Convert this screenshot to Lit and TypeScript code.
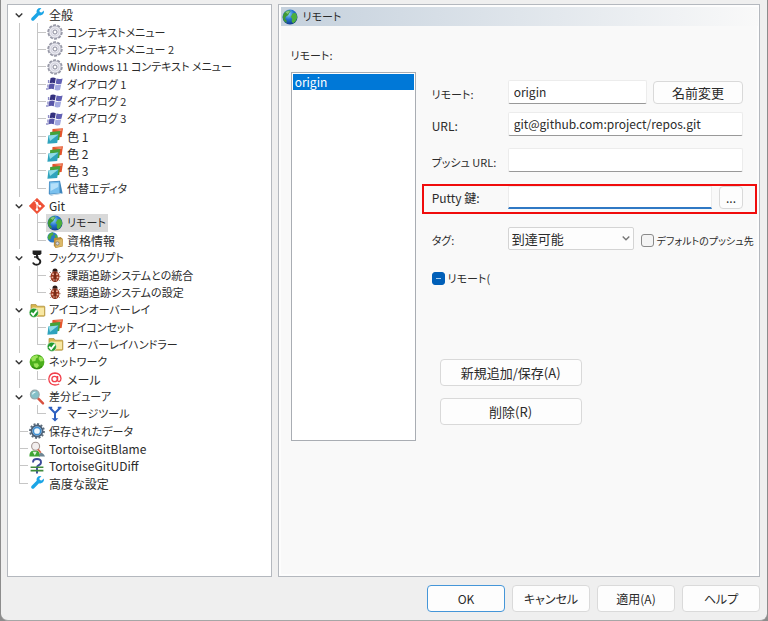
import { LitElement, html, svg, css, nothing } from "lit";
import { customElement, property, state } from "lit/decorators.js";
import { classMap } from "lit/directives/class-map.js";

const globe = svg`
  <circle cx="8" cy="8" r="7.5" fill="url(#sea)"/>
  <path d="M2.2 3.8Q4.5 1 7.5 1.2L8.6 2.6 7 4.2 6.4 6 4.2 7.4 3 9.6 4.6 11.4 4.4 14Q1 11.6.8 8.4 1 5.6 2.2 3.8Z" fill="#3f9a35"/>
  <path d="M10.8 4.2 13.6 4Q15.4 6 15.2 9L13.4 12.6 11 14.6 9.6 12.2 10.2 9.8 8.8 7.8Z" fill="#4cae3c"/>
  <path d="M3.5 3.2Q6 1.2 8 2.4L5.5 5Z" fill="#b9e7b0" opacity=".6"/>`;

const folderCheck = svg`
  <path d="M2 2.6h5l1.2 1.6H15q.8 0 .8.8V13.4q0 .8-.8.8H2z" fill="#d9b650" stroke="#a98a35" stroke-width=".7"/>
  <path d="M3.4 5.6h11.6v7.6H3.4z" fill="#f8e8a4"/>
  <circle cx="4.8" cy="10.8" r="4.6" fill="#219a2e" stroke="#e8f5e5" stroke-width=".6"/>
  <path d="M2.2 10.6 4.2 13 7.8 8.4" fill="none" stroke="#fff" stroke-width="1.9"/>`;

const layers = svg`
  <path d="M5.5 1 16 .2 14.6 9 5 10z" fill="#e4542c"/>
  <path d="M7 1.8 14.8 1.2 14.4 3z" fill="#f39a78"/>
  <path d="M3.2 4 13.2 3 12.2 12 2.6 13z" fill="#44a23a"/>
  <path d="M1.4 7.6 11.4 6.6 10.2 15 .4 15.8z" fill="#2fa3bd"/>
  <path d="M1.4 7.6 11.4 6.6 3 13z" fill="#8fdbe6"/>`;

const ICONS: Record<string, unknown> = {
  wrench: svg`<path d="M14.9 3.6 12.6 5.6 10.8 5 10.4 3.2 12.4 1.2Q9.8.6 8.2 2.4 7.1 3.9 7.7 5.8L2.5 11Q1.6 12.2 2.6 13.3 3.7 14.3 4.9 13.4L10 8.2Q12 8.8 13.6 7.6 15.4 6 14.9 3.6Z" fill="#1ba5e6"/>`,
  gear: svg`
    <circle cx="8" cy="8" r="6.7" fill="none" stroke="#9495a4" stroke-width="2" stroke-dasharray="2.9 1.3"/>
    <circle cx="8" cy="8" r="6.1" fill="#eaeaf1" stroke="#a3a4b2" stroke-width=".8"/>
    <circle cx="8" cy="8" r="4" fill="none" stroke="#d4d4df" stroke-width="1"/>
    <circle cx="8" cy="8" r="2" fill="#fff" stroke="#8a8b9b" stroke-width="1"/>`,
  windows: svg`
    <path d="M3.6 2Q6.2.8 8.8 2.2L7.9 7.2Q5.4 6.2 2.6 7.2z" fill="#34317f"/>
    <path d="M9.6 2.6Q12.4 3.6 15.6 2.4L14.4 7.8Q11.6 8.8 8.7 7.6z" fill="#6261b4"/>
    <path d="M2.4 8Q5.2 7 7.7 8L6.8 13.2Q4.2 12.2 1.2 13.4z" fill="#5856a8"/>
    <path d="M8.5 8.4Q11.4 9.6 14.2 8.6L13 14Q10.2 15 7.5 13.8z" fill="#a3a9e0"/>
    <path d="M1.6 4v3M1 8.6v3M0 12v2" stroke="#8b8ac6" stroke-width="1.4"/>`,
  layers,
  note: svg`
    <path d="M2 1.6 13 .8 15.6 13.4 4 15.4 1.8 14z" fill="#3f86bd"/>
    <path d="M2.6 2.2 12.4 1.6 12.6 13 2.8 13.8z" fill="#79c0ee"/>
    <path d="M3.6 3.4 11.4 3 11.2 7 3.6 11z" fill="#b5e0fa"/>
    <path d="M3 15 14.4 13.6" stroke="#d8e6ef" stroke-width="1"/>`,
  git: svg`
    <path d="M8 .2 15.8 8 8 15.8.2 8z" fill="#ee5035" stroke="#ee5035" stroke-width=".6" stroke-linejoin="round"/>
    <path d="M5.6 2.8 8 5.2V11.6M8 5.6 10.8 8.3" stroke="#fff" stroke-width="1.1" fill="none"/>
    <circle cx="8" cy="5.3" r="1.2" fill="#fff"/><circle cx="8" cy="11.6" r="1.3" fill="#fff"/><circle cx="11" cy="8.3" r="1.2" fill="#fff"/>`,
  globe,
  lock: svg`
    <circle cx="5.6" cy="5.4" r="5.2" fill="#2b78c8"/>
    <path d="M1 4Q3 .4 6 .6L6.6 2.6 4.4 4.2 3.6 7 2 8Q.2 6 1 4zM7.6 2.6 10 3 10.6 6 8.4 7z" fill="#4dab40"/>
    <path d="M7 6.2 13.6 5 15.9 7 15.7 14.4 8.6 16 6.8 13.8z" fill="#b98c38"/>
    <path d="M8.6 8.2 15.4 7V14L8.6 15.6z" fill="#dcb968"/>
    <circle cx="10.4" cy="11.4" r="1.7" fill="#d9d9d9" stroke="#777" stroke-width=".8"/>`,
  hook: svg`
    <path d="M3.6.6H12.4V3.4L11.2 5H4.8L3.6 3.4z" fill="#202020"/>
    <path d="M8 5V7.6L10.8 10Q12 12 10.4 13.6 8.4 15.4 5.8 14.4 4.4 13.8 4 12.4" fill="none" stroke="#202020" stroke-width="1.9"/>
    <path d="M5 7h4.6" stroke="#202020" stroke-width="1.4"/>`,
  bug: svg`
    <path d="M4 6 2.8 4.8M12 6 13.2 4.8M3.6 9.6H2.4M12.4 9.6h1.2M4.4 12.6 3.2 13.8M11.6 12.6 12.8 13.8" stroke="#8a6a5c" stroke-width=".8"/>
    <path d="M5.4 4.8Q5.4 1.6 8 1.6T10.6 4.8z" fill="#2a1a16"/>
    <ellipse cx="8" cy="9.6" rx="4.5" ry="5.4" fill="#9c3a22"/>
    <path d="M8 4.4v10.4" stroke="#4a1b10" stroke-width=".9"/>
    <g fill="#eebba6"><circle cx="6" cy="7.2" r=".9"/><circle cx="10" cy="7.2" r=".9"/><circle cx="5.4" cy="10.4" r=".9"/><circle cx="10.6" cy="10.4" r=".9"/><circle cx="7" cy="13" r=".7"/><circle cx="9.2" cy="13" r=".7"/></g>`,
  folderCheck,
  network: svg`
    <circle cx="8" cy="8" r="7.4" fill="#4caf1c"/>
    <path d="M2 4.4Q4.6 1 8 1.2L9.4 3 7 4.6 6.4 7 3.4 7.6zM10 2.4 13.4 3.6 14.6 7 11.4 7.4 9.6 5.2zM4.6 9.4 8.6 9.2 10 11.6 7.6 14.4 5.4 12.6z" fill="#9be35a"/>
    <path d="M3 12.4Q8 16.6 13 12.4" stroke="#2f8610" stroke-width="1.2" fill="none"/>`,
  mail: svg`
    <circle cx="7.6" cy="8" r="2.7" fill="none" stroke="#f2404c" stroke-width="1.3"/>
    <path d="M10.6 5V9.2Q10.8 10.8 12.2 10.6 14 10 14 7.6 13.6 2.2 8 2 2.2 2.4 1.8 8 2.2 13.8 8 14 10.4 14 12.2 13" fill="none" stroke="#f2404c" stroke-width="1.3"/>`,
  search: svg`
    <path d="M8.6 8.8 14 14.4" stroke="#d8513f" stroke-width="2.4" stroke-linecap="round"/>
    <circle cx="5.8" cy="5.6" r="4.4" fill="#84c0c8" stroke="#98a8ab" stroke-width="1.2"/>
    <path d="M3.4 5.4Q4 3.2 6.4 3.2" stroke="#e4f6f8" stroke-width="1.2" fill="none"/>`,
  merge: svg`
    <path d="M3 2 8 7 13 2M8 6.8V14" fill="none" stroke="#2c5fc0" stroke-width="2"/>
    <path d="M1.6 1.6H5.2M10.8 1.6H14.4" stroke="#2c5fc0" stroke-width="1.8"/>
    <path d="M4.6 12.2 8 15.6 11.4 12.2z" fill="#2c5fc0"/>`,
  blueGear: svg`
    <circle cx="8" cy="8" r="6.9" fill="none" stroke="#5d6c79" stroke-width="2" stroke-dasharray="2 1.6"/>
    <circle cx="8" cy="8" r="5.5" fill="#fff" stroke="#4b6078" stroke-width="1.8"/>
    <circle cx="8" cy="8" r="3.7" fill="#f0f8fd" stroke="#3f8fd2" stroke-width="1.7"/>`,
  blame: svg`
    <path d="M.4 15.4Q.2 9.8 4.6 9.4H8Q11 10.4 11 15.4z" fill="#3fa535"/>
    <path d="M9.8 15.4 11.4 11.8Q14 11.4 16 15.4z" fill="#6d8593"/>
    <circle cx="6.6" cy="5.2" r="4" fill="#f2eeee" stroke="#a59793" stroke-width="1.1"/>
    <path d="M9 8.2 11.8 11.8" stroke="#d06a50" stroke-width="1.8"/>
    <path d="M3.6 10.8 5.8 14.4 7.8 10.8z" fill="#e4f5e0"/>`,
  udiff: svg`
    <path d="M4 4.4Q4 1 8 1T12 4.2Q12 6.4 9.4 7.4 8 8 8 9.4V15.4" fill="none" stroke="#3b4a9a" stroke-width="1.9"/>
    <path d="M1.6 9.2H14.4M1.6 12.6H14.4" stroke="#3f8a3c" stroke-width="1.6"/>`,
  chevron: svg`<path d="M3.6 6 8 10.4 12.4 6" fill="none" stroke="currentColor" stroke-width="1.8"/>`,
};

@customElement("ui-icon")
class UiIcon extends LitElement {
  @property() name = "";

  static styles = css`
    :host { display: inline-flex; width: 16px; height: 16px; flex: none; }
    .art { width: 100%; height: 100%; display: block; overflow: visible; }
  `;

  render() {
    return html`<svg class="art" viewBox="0 0 16 16" aria-hidden="true">
      <defs><radialGradient id="sea" cx=".4" cy=".3" r=".8">
        <stop offset="0" stop-color="#8fd4f7"/><stop offset=".45" stop-color="#2572cf"/><stop offset="1" stop-color="#0a2b78"/>
      </radialGradient></defs>
      ${ICONS[this.name] ?? nothing}
    </svg>`;
  }
}

interface TreeNode {
  icon: string;
  text: string;
  children?: TreeNode[];
}

const TREE: TreeNode[] = [
  { icon: "wrench", text: "全般", children: [
    { icon: "gear", text: "コンテキストメニュー" },
    { icon: "gear", text: "コンテキストメニュー 2" },
    { icon: "gear", text: "Windows 11 コンテキスト メニュー" },
    { icon: "windows", text: "ダイアログ 1" },
    { icon: "windows", text: "ダイアログ 2" },
    { icon: "windows", text: "ダイアログ 3" },
    { icon: "layers", text: "色 1" },
    { icon: "layers", text: "色 2" },
    { icon: "layers", text: "色 3" },
    { icon: "note", text: "代替エディタ" },
  ] },
  { icon: "git", text: "Git", children: [
    { icon: "globe", text: "リモート" },
    { icon: "lock", text: "資格情報" },
  ] },
  { icon: "hook", text: "フックスクリプト", children: [
    { icon: "bug", text: "課題追跡システムとの統合" },
    { icon: "bug", text: "課題追跡システムの設定" },
  ] },
  { icon: "folderCheck", text: "アイコンオーバーレイ", children: [
    { icon: "layers", text: "アイコンセット" },
    { icon: "folderCheck", text: "オーバーレイハンドラー" },
  ] },
  { icon: "network", text: "ネットワーク", children: [{ icon: "mail", text: "メール" }] },
  { icon: "search", text: "差分ビューア", children: [{ icon: "merge", text: "マージツール" }] },
  { icon: "blueGear", text: "保存されたデータ" },
  { icon: "blame", text: "TortoiseGitBlame" },
  { icon: "udiff", text: "TortoiseGitUDiff" },
  { icon: "wrench", text: "高度な設定" },
];

/** Labels with a run of four or more kana are set one size smaller. */
const isKana = (text: string) => /[\u3041-\u30ff]{4,}/.test(text);

@customElement("settings-tree")
class SettingsTree extends LitElement {
  @state() private selected = "リモート";

  static styles = css`
    :host { display: block; background: #fff; border: 1px solid #b4b8be; padding: 1px; min-width: 0; overflow: hidden; }
    .tree { list-style: none; margin: 0; padding: 0 0 0 1px; display: grid; grid-auto-rows: 1fr; height: 486px; }
    .row { display: flex; min-height: 0; align-items: center; line-height: 17px; white-space: nowrap; }
    .guide { width: 18px; align-self: stretch; flex: none; background-repeat: no-repeat; --dot: linear-gradient(#c6c6c6, #c6c6c6); }
    .line { background-image: var(--dot); background-size: 1px 100%; background-position: 9px 0; }
    .tee { background-image: var(--dot), var(--dot); background-size: 1px 100%, 9px 1px; background-position: 9px 0, 9px 50%; }
    .elbow { background-image: var(--dot), var(--dot); background-size: 1px 50%, 9px 1px; background-position: 9px 0, 9px 50%; }
    .toggle { width: 18px; height: 16px; flex: none; border: 0; padding: 0 0 0 3px; background: none; color: #333; display: flex; align-items: center; }
    .chev { width: 12px; height: 12px; }
    .node { display: flex; align-items: center; align-self: stretch; gap: 4px; padding: 0 2px 0 1px; cursor: default; }
    .kana { font-size: 11px; }
    .on { background: #d9d9d9; }
  `;

  private node(n: TreeNode) {
    return html`<span class=${classMap({ node: true, kana: isKana(n.text), on: this.selected === n.text })}
      @click=${() => (this.selected = n.text)}><ui-icon name=${n.icon}></ui-icon><span>${n.text}</span></span>`;
  }

  render() {
    return html`<ul class="tree" role="tree">
      ${TREE.map((root, i) => {
        const last = i === TREE.length - 1;
        return html`
          <li class="row" role="treeitem" aria-level="1">
            ${root.children
              ? html`<button class="toggle" aria-label=${root.text}><ui-icon class="chev" name="chevron"></ui-icon></button>`
              : html`<span class="guide ${last ? "elbow" : "tee"}"></span>`}
            ${this.node(root)}
          </li>
          ${(root.children ?? []).map((child, j, all) => html`
            <li class="row" role="treeitem" aria-level="2">
              <span class="guide line"></span>
              <span class="guide ${j === all.length - 1 ? "elbow" : "tee"}"></span>
              ${this.node(child)}
            </li>`)}`;
      })}
    </ul>`;
  }
}

@customElement("remote-page")
class RemotePage extends LitElement {
  static styles = css`
    :host { display: flex; flex-direction: column; background: #f9f9f9; border: 1px solid #b4b8be; padding: 2px 1px 2px 2px; min-width: 0; overflow: hidden; box-shadow: inset 0 0 0 2px #fdfdfd; }
    * { box-sizing: border-box; }
    .title { height: 19px; flex: none; margin: 0; padding-left: 1px; display: flex; align-items: center; gap: 5px; font-size: 11px; font-weight: 400; background: linear-gradient(90deg, #c5d1dd, #f9f9f9); }
    .body { flex: 1; display: flex; gap: 6px; padding: 19px 0 0 10px; min-width: 0; }
    .remotes { width: 125px; flex: none; display: flex; flex-direction: column; gap: 7px; line-height: 20px; }
    .caption { font-size: 11px; }
    .list { height: 369px; border: 1px solid #a9adb3; background: #fff; margin: 0; padding: 1px; list-style: none; }
    .item { background: #0078d7; color: #fff; line-height: 16px; padding-left: 2px; }
    .form { flex: 1; min-width: 0; margin: 0; padding: 35px 1px 0 0; display: flex; flex-direction: column; }
    .row { display: flex; align-items: center; padding: 0 14px 0 10px; }
    .near { margin-top: 8px; }
    .mid { margin-top: 12px; }
    .far { margin-top: 20px; }
    .apart { margin-top: 72px; }
    .label { width: 76px; height: 24px; flex: none; white-space: nowrap; line-height: 20px; padding-top: 4px; }
    .kana { font-size: 11px; }
    .field { flex: 1; min-width: 0; height: 24px; padding: 0 5px 2px; border: 1px solid #ececec; border-bottom: 1px solid #999; border-radius: 2px; background: #fff; font: inherit; color: inherit; outline: 0; }
    .marked { border: 2px solid #f00c0c; padding: 0 12px 3px 8px; }
    .marked .label { height: 20px; padding: 0; }
    .marked .field { height: 23px; border-radius: 0; border-bottom: 2px solid #2f78c4; }
    .btn { height: 23px; border: 1px solid #d9d9d9; border-radius: 4px; background: #fdfdfd; font: inherit; font-size: 13px; color: inherit; padding: 0; }
    .rename { width: 90px; margin-left: 6px; }
    .browse { width: 24px; margin-left: 7px; font-size: 12px; }
    .wide { width: 142px; height: 27px; margin-left: 8px; }
    .pick { width: 126px; flex: none; display: grid; align-items: center; }
    .select { grid-area: 1 / 1; appearance: none; height: 23px; width: 100%; padding: 0 3px; border: 1px solid #d4d4d4; border-radius: 2px; background: #fdfdfd; font: inherit; font-size: 13px; color: inherit; }
    .arrow { grid-area: 1 / 1; justify-self: end; width: 12px; height: 12px; margin-right: 2px; color: #777; pointer-events: none; }
    .tags { padding-right: 0; }
    .check { display: flex; align-items: center; gap: 3px; white-space: nowrap; font-size: 11px; }
    .after { margin-left: 7px; padding-top: 4px; font-size: 10px; }
    .box { appearance: none; width: 13px; height: 13px; margin: 0; border: 1px solid #8a8a8a; border-radius: 3px; background: #f4f4f4; flex: none; display: grid; place-items: center; }
    .box:indeterminate { background: #005fb8; border-color: #005fb8; }
    .box:indeterminate::before { content: ""; width: 5px; height: 1px; background: #a8cdee; }
  `;

  render() {
    return html`
      <h1 class="title"><ui-icon name="globe"></ui-icon>リモート</h1>
      <div class="body">
        <div class="remotes">
          <span class="caption" id="remotes">リモート:</span>
          <ul class="list" role="listbox" aria-labelledby="remotes">
            <li class="item" role="option" aria-selected="true">origin</li>
          </ul>
        </div>
        <form class="form" @submit=${(e: Event) => e.preventDefault()}>
          <div class="row">
            <label class="label kana" for="name">リモート:</label>
            <input class="field" id="name" .value=${"origin"}>
            <button class="btn rename" type="button">名前変更</button>
          </div>
          <div class="row near">
            <label class="label" for="url">URL:</label>
            <input class="field" id="url" .value=${"git@github.com:project/repos.git"}>
          </div>
          <div class="row mid">
            <label class="label kana" for="push">プッシュ URL:</label>
            <input class="field" id="push">
          </div>
          <div class="row mid marked">
            <label class="label" for="key">Putty 鍵:</label>
            <input class="field" id="key">
            <button class="btn browse" type="button">...</button>
          </div>
          <div class="row mid tags">
            <label class="label kana" for="tag">タグ:</label>
            <span class="pick">
              <select class="select" id="tag"><option>到達可能</option></select>
              <ui-icon class="arrow" name="chevron"></ui-icon>
            </span>
            <label class="check after"><input class="box" type="checkbox">デフォルトのプッシュ先</label>
          </div>
          <div class="row far">
            <label class="check"><input class="box" type="checkbox" .indeterminate=${true}>リモート(</label>
          </div>
          <div class="row apart"><button class="btn wide" type="button">新規追加/保存(A)</button></div>
          <div class="row mid"><button class="btn wide" type="button">削除(R)</button></div>
        </form>
      </div>`;
  }
}

@customElement("app-root")
class AppRoot extends LitElement {
  static styles = css`
    :host { display: flex; min-height: 100vh; box-sizing: border-box; padding: 0 1px; background: #8c8c8c;
      font: 12px/17px "Noto Sans CJK JP", sans-serif; font-feature-settings: "palt"; color: #2b2b2b; }
    .window { flex: 1; min-width: 0; display: flex; flex-direction: column; padding: 4px 7px 8px 6px; background: #efefef; border-bottom: 1px solid #a6a6a6; border-radius: 0 0 7px 7px; }
    .panes { flex: 1; display: grid; grid-template-columns: minmax(0, 265fr) minmax(0, 483fr); gap: 6px; }
    .actions { display: flex; justify-content: flex-end; gap: 7px; padding-top: 8px; }
    .action { width: 78px; height: 27px; border: 1px solid #dadada; border-radius: 4px; background: #fdfdfd; font: inherit; color: inherit; padding: 0; }
    .primary { border-color: #4596d8; }
  `;

  render() {
    return html`
      <div class="window">
        <main class="panes">
          <settings-tree></settings-tree>
          <remote-page></remote-page>
        </main>
        <footer class="actions">
          <button class="action primary">OK</button>
          <button class="action">キャンセル</button>
          <button class="action">適用(A)</button>
          <button class="action">ヘルプ</button>
        </footer>
      </div>`;
  }
}
